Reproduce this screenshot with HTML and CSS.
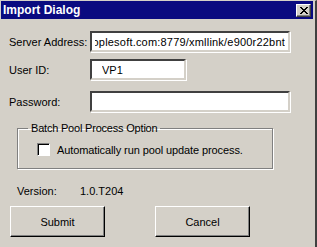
FILE: index.html
```html
<!DOCTYPE html>
<html lang="en">
<head>
    <meta charset="UTF-8">
    <title>Import Dialog</title>
    <link rel="stylesheet" href="styles.css">
</head>
<body>
    <div class="dialog">
        <div class="titlebar">
            <span class="title">Import Dialog</span>
            <button class="close-btn" aria-label="Close">
                <svg width="8" height="7" viewBox="0 0 8 7">
                    <path d="M0 0h2v1h1v1h2V1h1V0h2v1H7v1H6v1H5v1h1v1h1v1h1v1H6V6H5V5H3v1H2v1H0V6h1V5h1V4h1V3H2V2H1V1H0z" fill="#000"/>
                </svg>
            </button>
        </div>
        <div class="content">
            <div class="row row-server">
                <label for="server">Server Address:</label>
                <input type="text" id="server" class="field field-wide field-url" value="ttp://peoplesoft.com:8779/xmllink/e900r22bnt">
            </div>
            <div class="row row-user">
                <label for="user-id">User ID:</label>
                <input type="text" id="user-id" class="field field-short" value="VP1">
            </div>
            <div class="row row-pass">
                <label for="password">Password:</label>
                <input type="password" id="password" class="field field-wide">
            </div>
            <fieldset class="group">
                <legend>Batch Pool Process Option</legend>
                <label class="check">
                    <span class="checkbox"></span>
                    <span class="check-text">Automatically run pool update process.</span>
                </label>
            </fieldset>
            <div class="version">
                <span class="version-label">Version:</span>
                <span>1.0.T204</span>
            </div>
            <div class="buttons">
                <button class="btn">Submit</button>
                <button class="btn">Cancel</button>
            </div>
        </div>
    </div>
</body>
</html>
```
FILE: styles.css
```css
/* classic grey dialog */
* {
    margin: 0;
    padding: 0;
    box-sizing: border-box;
}
body {
    font-family: "Liberation Sans", Arial, sans-serif;
    font-size: 11px;
    color: #000;
    background-color: #d4d0c8;
    width: 317px;
    height: 247px;
    overflow: hidden;
    white-space: nowrap;
}
.dialog {
    width: 317px;
    height: 247px;
    background-color: #d4d0c8;
    border-top: 1px solid #d4d0c8;
    border-right: 2px solid #404040;
    display: flex;
    flex-direction: column;
}
.titlebar {
    height: 18px;
    margin: 0 2px 0 1px;
    background-color: #0a0a80;
    display: flex;
    align-items: center;
    justify-content: space-between;
    padding: 0 2px 0 2px;
}
.title {
    color: #fff;
    font-weight: bold;
    font-size: 12px;
    font-family: "Liberation Sans", Arial, sans-serif;
}
.close-btn {
    width: 15px;
    height: 13px;
    margin-top: 1px;
    background-color: #d4d0c8;
    border: 1px solid;
    border-color: #fff #404040 #404040 #fff;
    box-shadow: inset -1px -1px 0 #808080;
    display: flex;
    align-items: center;
    justify-content: center;
}
.content {
    padding: 12px 0 0 9px;
}
.row {
    display: flex;
    align-items: center;
}
.row label {
    width: 81px;
}
.field {
    height: 21px;
    border: 2px solid;
    border-color: #404040 #d4d0c8 #d4d0c8 #404040;
    box-shadow: 1px 1px 0 #fff;
    background-color: #fff;
    font-family: "Liberation Sans", Arial, sans-serif;
    font-size: 11px;
    padding: 0 3px;
    color: #000;
}
.field-wide {
    width: 200px;
}
.field-url {
    direction: rtl;
    letter-spacing: 0.2px;
}
.field-short {
    width: 96px;
    padding-left: 10px;
}
.row-user {
    margin-top: 7px;
}
.row-pass {
    margin-top: 11px;
}
.group {
    margin: 10px 0 0 8px;
    width: 256px;
    height: 47px;
    border: 1px solid #808080;
    box-shadow: 1px 1px 0 #fff, inset 1px 1px 0 #fff;
}
.group legend {
    padding: 0 3px;
    margin-left: 10px;
    letter-spacing: -0.2px;
}
.check {
    display: flex;
    align-items: center;
    gap: 7px;
    margin: 9px 0 0 19px;
}
.check-text {
    letter-spacing: -0.1px;
}
.checkbox {
    width: 13px;
    height: 13px;
    background-color: #fff;
    border: 1px solid;
    border-color: #808080 #fff #fff #808080;
    box-shadow: inset 1px 1px 0 #000;
}
.version {
    display: flex;
    margin: 16px 0 0 8px;
}
.version-label {
    width: 63px;
}
.buttons {
    display: flex;
    gap: 50px;
    margin: 9px 0 0 1px;
}
.btn {
    width: 95px;
    height: 31px;
    background-color: #d4d0c8;
    border: 1px solid;
    border-color: #fff #000 #000 #fff;
    box-shadow: inset -1px -1px 0 #808080;
    font-family: "Liberation Sans", Arial, sans-serif;
    font-size: 11px;
    color: #000;
}
```
